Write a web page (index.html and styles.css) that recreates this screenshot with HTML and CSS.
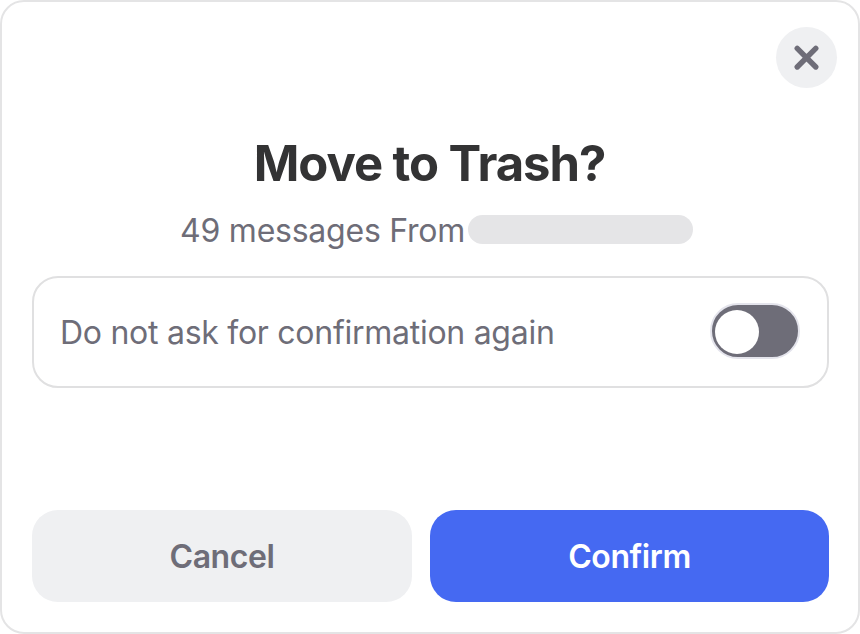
FILE: index.html
```html
<!DOCTYPE html>
<html lang="en">
<head>
<meta charset="utf-8">
<title>Move to Trash?</title>
<link rel="stylesheet" href="styles.css">
</head>
<body>
<main class="dialog" role="dialog" aria-labelledby="title">
  <header class="top">
    <button class="close" aria-label="Close">
      <svg viewBox="0 0 61 61" width="61" height="61"><path d="M21.2 21.4 39.8 40M39.8 21.4 21.2 40"/></svg>
    </button>
  </header>
  <h1 class="title" id="title"><span>Move to Trash?</span></h1>
  <p class="subtitle"><span class="count">49 messages From</span><span class="redacted"></span></p>
  <label class="option">
    <span class="option-text">Do not ask for confirmation again</span>
    <span class="switch"><span class="knob"></span></span>
  </label>
  <footer class="actions">
    <button class="btn cancel"><span>Cancel</span></button>
    <button class="btn confirm"><span>Confirm</span></button>
  </footer>
</main>
</body>
</html>
```

FILE: styles.css
```css
* { box-sizing: border-box; }
body { margin: 0; background: #fff; font-family: Inter, "Liberation Sans", sans-serif; color: #6e6d78; }
button { border: 0; padding: 0; font: inherit; color: inherit; }
.dialog { width: 860px; height: 634px; border: 2px solid #e4e4e5; border-radius: 24px; background: #fff; padding: 25px 29px 30px 30px; display: flex; flex-direction: column; }
.top { display: flex; justify-content: flex-end; margin-right: -8px; }
.close { width: 61px; height: 61px; border-radius: 50%; background: #eff0f2; }
.close svg { display: block; fill: none; stroke: #6e6d78; stroke-width: 5.4; stroke-linecap: round; }
.title { margin: 46px 0 0; padding-right: 2px; height: 60px; line-height: 60px; text-align: center; font-size: 49px; font-weight: 700; letter-spacing: -1.05px; color: #333334; white-space: nowrap; }
.subtitle { margin: 20px 0 0; height: 30px; display: flex; align-items: center; padding-left: 148px; font-size: 32px; white-space: nowrap; }
.count { width: 288px; letter-spacing: -0.23px; padding-top: 3px; }
.redacted { width: 225px; height: 29px; border-radius: 15px; background: #e5e5e7; }
.option { margin-top: 32px; height: 112px; border: 2px solid #e0e0e1; border-radius: 26px; display: flex; align-items: center; justify-content: space-between; padding: 0 27px 0 26px; font-size: 32px; letter-spacing: -0.27px; white-space: nowrap; }
.option-text { padding-top: 1px; }
.switch { width: 90px; height: 56px; margin-bottom: 2px; border: 2px solid #e4e4ec; border-radius: 28px; background: #6e6d78; padding: 5px 3px; }
.knob { display: block; width: 44px; height: 44px; border-radius: 50%; background: #fff; }
.actions { margin-top: auto; display: flex; gap: 18px; }
.btn { height: 92px; border-radius: 26px; font-size: 32px; font-weight: 600; letter-spacing: -0.4px; }
.cancel { width: 380px; background: #eff0f2; }
.confirm { flex: 1; background: #4569f2; color: #fff; }
```
